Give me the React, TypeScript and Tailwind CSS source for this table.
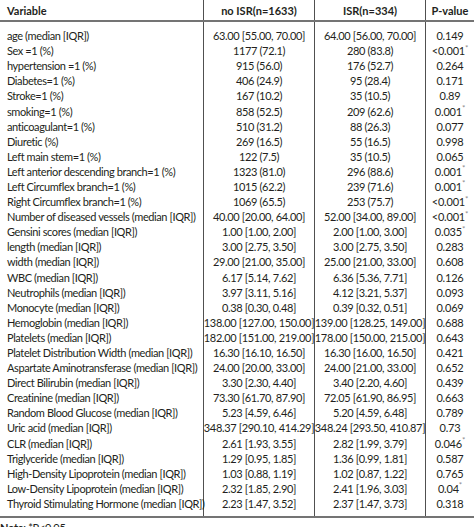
const rows: [string, string, string, string, boolean?][] = [
  ['age (median [IQR])', '63.00 [55.00, 70.00]', '64.00 [56.00, 70.00]', '0.149'],
  ['Sex =1 (%)', '1177 (72.1)', '280 (83.8)', '<0.001', true],
  ['hypertension =1 (%)', '915 (56.0)', '176 (52.7)', '0.264'],
  ['Diabetes=1 (%)', '406 (24.9)', '95 (28.4)', '0.171'],
  ['Stroke=1 (%)', '167 (10.2)', '35 (10.5)', '0.89'],
  ['smoking=1 (%)', '858 (52.5)', '209 (62.6)', '0.001', true],
  ['anticoagulant=1 (%)', '510 (31.2)', '88 (26.3)', '0.077'],
  ['Diuretic (%)', '269 (16.5)', '55 (16.5)', '0.998'],
  ['Left main stem=1 (%)', '122 (7.5)', '35 (10.5)', '0.065'],
  ['Left anterior descending branch=1 (%)', '1323 (81.0)', '296 (88.6)', '0.001', true],
  ['Left Circumflex branch=1 (%)', '1015 (62.2)', '239 (71.6)', '0.001', true],
  ['Right Circumflex branch=1 (%)', '1069 (65.5)', '253 (75.7)', '<0.001', true],
  ['Number of diseased vessels (median [IQR])', '40.00 [20.00, 64.00]', '52.00 [34.00, 89.00]', '<0.001', true],
  ['Gensini scores (median [IQR])', '1.00 [1.00, 2.00]', '2.00 [1.00, 3.00]', '0.035', true],
  ['length (median [IQR])', '3.00 [2.75, 3.50]', '3.00 [2.75, 3.50]', '0.283'],
  ['width (median [IQR])', '29.00 [21.00, 35.00]', '25.00 [21.00, 33.00]', '0.608'],
  ['WBC (median [IQR])', '6.17 [5.14, 7.62]', '6.36 [5.36, 7.71]', '0.126'],
  ['Neutrophils (median [IQR])', '3.97 [3.11, 5.16]', '4.12 [3.21, 5.37]', '0.093'],
  ['Monocyte (median [IQR])', '0.38 [0.30, 0.48]', '0.39 [0.32, 0.51]', '0.069'],
  ['Hemoglobin (median [IQR])', '138.00 [127.00, 150.00]', '139.00 [128.25, 149.00]', '0.688'],
  ['Platelets (median [IQR])', '182.00 [151.00, 219.00]', '178.00 [150.00, 215.00]', '0.643'],
  ['Platelet Distribution Width (median [IQR])', '16.30 [16.10, 16.50]', '16.30 [16.00, 16.50]', '0.421'],
  ['Aspartate Aminotransferase (median [IQR])', '24.00 [20.00, 33.00]', '24.00 [21.00, 33.00]', '0.652'],
  ['Direct Bilirubin (median [IQR])', '3.30 [2.30, 4.40]', '3.40 [2.20, 4.60]', '0.439'],
  ['Creatinine (median [IQR])', '73.30 [61.70, 87.90]', '72.05 [61.90, 86.95]', '0.663'],
  ['Random Blood Glucose (median [IQR])', '5.23 [4.59, 6.46]', '5.20 [4.59, 6.48]', '0.789'],
  ['Uric acid (median [IQR])', '348.37 [290.10, 414.29]', '348.24 [293.50, 410.87]', '0.73'],
  ['CLR (median [IQR])', '2.61 [1.93, 3.55]', '2.82 [1.99, 3.79]', '0.046', true],
  ['Triglyceride (median [IQR])', '1.29 [0.95, 1.85]', '1.36 [0.99, 1.81]', '0.587'],
  ['High-Density Lipoprotein (median [IQR])', '1.03 [0.88, 1.19]', '1.02 [0.87, 1.22]', '0.765'],
  ['Low-Density Lipoprotein (median [IQR])', '2.32 [1.85, 2.90]', '2.41 [1.96, 3.03]', '0.04', true],
  ['Thyroid Stimulating Hormone (median [IQR])', '2.23 [1.47, 3.52]', '2.37 [1.47, 3.73]', '0.318'],
];

function Star() {
  return <span className="relative -top-[3px] text-[8px] text-[#8a8a8a]">*</span>;
}

export default function App() {
  return (
    <div className="h-[527px] w-[474px] overflow-hidden bg-white text-[11px] leading-none text-[#231f20] [font-family:Lato,'Liberation_Sans',sans-serif]">
      <div className="grid grid-cols-[204px_111px_111px_48px] border-b-2 border-[#747474]">
        {/* Header */}
        <div className="flex h-[20px] items-center border-r border-[#505050] pl-[7px] font-bold">Variable</div>
        <div className="flex items-center justify-center border-r border-[#505050] font-bold">no ISR(n=1633)</div>
        <div className="flex items-center justify-center border-r border-[#505050] font-bold">ISR(n=334)</div>
        <div className="flex items-center justify-center font-bold">P-value</div>
        <div className="col-span-4 h-[2px] bg-[#747474]" />

        {/* Body */}
        <div className="flex flex-col border-r border-[#505050] pt-[6px] pb-[5px]">
          {rows.map((r) => (
            <div key={r[0]} className="flex h-[15.1px] items-center whitespace-nowrap pl-[7px] tracking-[-0.4px]">
              {r[0]}
            </div>
          ))}
        </div>
        <div className="flex flex-col border-r border-[#505050] pt-[6px] pb-[5px]">
          {rows.map((r) => (
            <div key={r[0]} className="flex h-[15.1px] items-center justify-center whitespace-nowrap tracking-[-0.35px]">
              {r[1]}
            </div>
          ))}
        </div>
        <div className="flex flex-col border-r border-[#505050] pt-[6px] pb-[5px]">
          {rows.map((r) => (
            <div key={r[0]} className="flex h-[15.1px] items-center justify-center whitespace-nowrap tracking-[-0.35px]">
              {r[2]}
            </div>
          ))}
        </div>
        <div className="flex flex-col pt-[6px] pb-[5px]">
          {rows.map((r) => (
            <div key={r[0]} className="flex h-[15.1px] items-center justify-center whitespace-nowrap tracking-[-0.2px]">
              {r[3]}
              {r[4] && <Star />}
            </div>
          ))}
        </div>
      </div>
      <p className="pt-[4px] text-[11px] tracking-[-0.3px]">
        <span className="font-bold">Note</span>: *P≤0.05
      </p>
    </div>
  );
}
